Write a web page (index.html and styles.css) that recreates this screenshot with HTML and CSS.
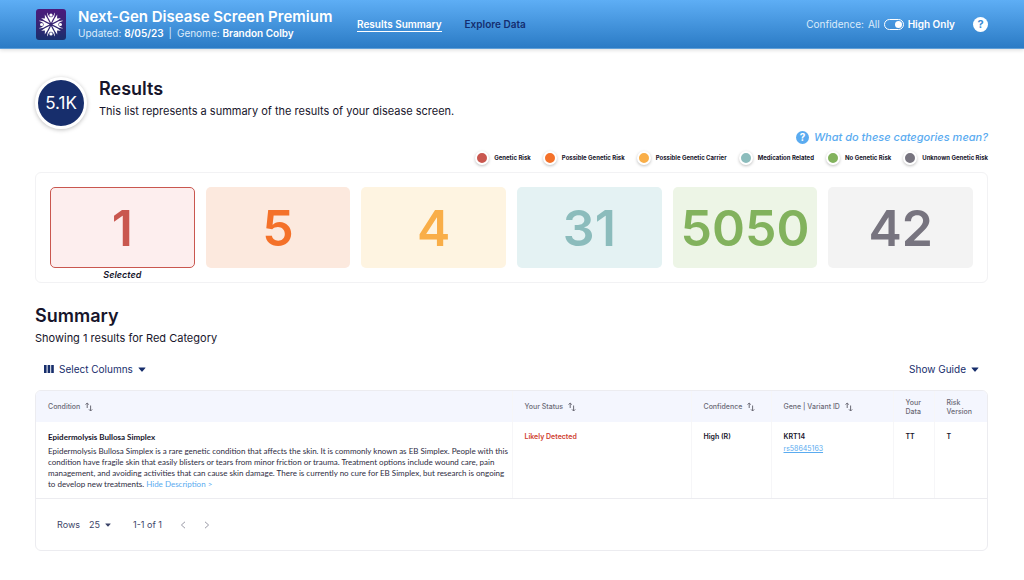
FILE: index.html
```html
<!DOCTYPE html>
<html lang="en">
<head>
    <meta charset="UTF-8">
    <meta name="viewport" content="width=device-width, initial-scale=1.0">
    <title>Next-Gen Disease Screen Premium</title>
    <link rel="stylesheet" href="styles.css">
</head>
<body>
    <!-- Shared icons -->
    <svg class="sprite" aria-hidden="true">
        <symbol id="sort" viewBox="0 0 8 10">
            <path d="M2.2 6V1M0.6 2.6L2.2 1l1.6 1.6M5.6 3.5V9M4 7.4L5.6 9l1.6-1.6" fill="none" stroke="currentColor" stroke-width="1"/>
        </symbol>
        <symbol id="caret" viewBox="0 0 8 5">
            <path d="M0.8 0.4h6.4q0.6 0.2 0.2 0.7L4.4 4.5q-0.4 0.3-0.8 0L0.6 1.1q-0.4-0.5 0.2-0.7z" fill="currentColor"/>
        </symbol>
    </svg>

    <header class="navbar">
        <svg class="logo" viewBox="0 0 30 31" aria-hidden="true">
            <defs>
                <linearGradient id="logo-bg" x1="0" y1="0" x2="0" y2="1">
                    <stop offset="0" stop-color="#4b1a7c"/>
                    <stop offset="0.45" stop-color="#3a2474"/>
                    <stop offset="1" stop-color="#182f6c"/>
                </linearGradient>
                <g id="figure">
                    <circle cx="0" cy="-9.4" r="1.6"/>
                    <path d="M-3.6-11.8Q-2.4-7.4 0-7.2Q2.4-7.4 3.6-11.8L4-11.4Q3.6-7 1.7-5L0-1.4L-1.7-5Q-3.6-7-4-11.4z"/>
                </g>
                <path id="ray" d="M0-1.6L-1.7-7L-2.6-11.4L0-8.6L2.6-11.4L1.7-7z"/>
            </defs>
            <rect width="30" height="31" rx="3" fill="url(#logo-bg)"/>
            <g transform="translate(15 15.5)" fill="#fff">
                <use href="#figure"/>
                <use href="#figure" transform="rotate(90)"/>
                <use href="#figure" transform="rotate(180)"/>
                <use href="#figure" transform="rotate(270)"/>
                <use href="#ray" transform="rotate(45)"/>
                <use href="#ray" transform="rotate(135)"/>
                <use href="#ray" transform="rotate(225)"/>
                <use href="#ray" transform="rotate(315)"/>
            </g>
        </svg>
        <div class="navbar-info">
            <h1 class="navbar-title">Next-Gen Disease Screen Premium</h1>
            <p class="navbar-meta">Updated: <strong>8/05/23</strong><span class="separator">|</span>Genome: <strong>Brandon Colby</strong></p>
        </div>
        <nav class="navbar-links">
            <a class="active" href="#results">Results Summary</a>
            <a href="#explore">Explore Data</a>
        </nav>
        <div class="confidence">
            <span>Confidence:</span>
            <span>All</span>
            <input type="checkbox" id="high-only" class="toggle" checked>
            <label for="high-only">High Only</label>
        </div>
        <button class="help-btn" aria-label="Help"><span class="question">?</span></button>
    </header>

    <main>
        <section class="results" id="results">
            <div class="total">5.1K</div>
            <div>
                <h2>Results</h2>
                <p class="subtitle">This list represents a summary of the results of your disease screen.</p>
            </div>
        </section>

        <a class="help-link" href="#categories"><span class="question">?</span>What do these categories mean?</a>

        <ul class="legend">
            <li class="red">Genetic Risk</li>
            <li class="orange">Possible Genetic Risk</li>
            <li class="yellow">Possible Genetic Carrier</li>
            <li class="teal">Medication Related</li>
            <li class="green">No Genetic Risk</li>
            <li class="gray">Unknown Genetic Risk</li>
        </ul>

        <ul class="categories" id="categories">
            <li class="red selected"><button>1</button><span>Selected</span></li>
            <li class="orange"><button>5</button></li>
            <li class="yellow"><button>4</button></li>
            <li class="teal"><button>31</button></li>
            <li class="green"><button>5050</button></li>
            <li class="gray"><button>42</button></li>
        </ul>

        <section class="summary">
            <h2>Summary</h2>
            <p class="subtitle">Showing 1 results for Red Category</p>
        </section>

        <div class="toolbar">
            <button>
                <svg class="columns-icon" viewBox="0 0 10 8" aria-hidden="true"><path d="M0 0h2.6v8H0zM3.6 0h2.6v8H3.6zM7.2 0h2.6v8H7.2z" fill="currentColor"/></svg>
                Select Columns
                <svg class="caret"><use href="#caret"/></svg>
            </button>
            <button>
                Show Guide
                <svg class="caret"><use href="#caret"/></svg>
            </button>
        </div>

        <div class="table-card">
            <table>
                <colgroup>
                    <col>
                    <col class="col-status">
                    <col class="col-confidence">
                    <col class="col-gene">
                    <col class="col-data">
                    <col class="col-version">
                </colgroup>
                <thead>
                    <tr>
                        <th><div class="heading">Condition <svg class="sort"><use href="#sort"/></svg></div></th>
                        <th><div class="heading">Your Status <svg class="sort"><use href="#sort"/></svg></div></th>
                        <th><div class="heading">Confidence <svg class="sort"><use href="#sort"/></svg></div></th>
                        <th><div class="heading">Gene | Variant ID <svg class="sort"><use href="#sort"/></svg></div></th>
                        <th>Your Data</th>
                        <th>Risk Version</th>
                    </tr>
                </thead>
                <tbody>
                    <tr>
                        <td class="condition">
                            <h3>Epidermolysis Bullosa Simplex</h3>
                            <p class="description">Epidermolysis Bullosa Simplex is a rare genetic condition that affects the skin. It is commonly known as EB Simplex. People with this condition have fragile skin that easily blisters or tears from minor friction or trauma. Treatment options include wound care, pain management, and avoiding activities that can cause skin damage. There is currently no cure for EB Simplex, but research is ongoing to develop new treatments. <a href="#hide">Hide Description &gt;</a></p>
                        </td>
                        <td class="status">Likely Detected</td>
                        <td>High (R)</td>
                        <td>KRT14<a class="variant" href="#rs58645163">rs58645163</a></td>
                        <td>TT</td>
                        <td>T</td>
                    </tr>
                </tbody>
            </table>
            <div class="pagination">
                <label for="rows">Rows</label>
                <div class="rows-select">
                    <select id="rows">
                        <option>25</option>
                        <option>50</option>
                        <option>100</option>
                    </select>
                    <svg class="caret"><use href="#caret"/></svg>
                </div>
                <span>1-1 of 1</span>
                <button aria-label="Previous page"><svg viewBox="0 0 6 8"><path d="M5 0.8L1.4 4L5 7.2" fill="none" stroke="currentColor"/></svg></button>
                <button aria-label="Next page"><svg viewBox="0 0 6 8"><path d="M1 0.8L4.6 4L1 7.2" fill="none" stroke="currentColor"/></svg></button>
            </div>
        </div>
    </main>
</body>
</html>
```
FILE: styles.css
```css
/* Basic reset */
*, *::before {
    box-sizing: border-box;
}

body {
    margin: 0;
    background-color: #fff;
    color: #17152b;
    font-family: Inter, "Liberation Sans", sans-serif;
    font-size: 11px;
}

h1, h2, h3, p, ul {
    margin: 0;
    padding: 0;
}

ul {
    list-style: none;
}

button, select {
    padding: 0;
    border: none;
    background: none;
    color: inherit;
    font: inherit;
    cursor: pointer;
}

a {
    color: #5aabf0;
    text-decoration: none;
}

.sprite {
    display: none;
}

/* Category colors */
.red { --color: #c9574f; --tint: #fdeeee; }
.orange { --color: #f47129; --tint: #fce9de; }
.yellow { --color: #f9ae48; --tint: #fef4e1; }
.teal { --color: #8bbcbc; --tint: #e4f2f3; }
.green { --color: #82b25d; --tint: #edf5e6; }
.gray { --color: #77747f; --tint: #f3f3f3; }

/* Navbar */
.navbar {
    display: flex;
    align-items: center;
    height: 49px;
    padding: 0 36px;
    background: linear-gradient(#5eaef5, #2b7bc5);
    border-bottom: 1px solid #5f9fd8;
    box-shadow: 0 1px 4px rgba(0, 0, 0, 0.15);
    color: #fff;
}

.logo {
    width: 30px;
    height: 31px;
    margin-right: 12px;
}

.navbar-info {
    width: 279px;
}

.navbar-title {
    font-size: 15px;
    font-weight: 600;
    line-height: 18px;
    white-space: nowrap;
}

.navbar-meta {
    color: #dcebfa;
    font-size: 10px;
    line-height: 14px;
}

.navbar-meta strong {
    color: #fff;
    font-weight: 600;
}

.separator {
    margin: 0 5px;
}

.navbar-links {
    display: flex;
    gap: 23px;
    font-size: 10px;
    font-weight: 600;
    line-height: 14px;
}

.navbar-links a {
    padding-top: 1px;
    border-bottom: 1px solid transparent;
    color: #142e70;
}

.navbar-links .active {
    border-color: #fff;
    color: #fff;
}

.confidence {
    display: flex;
    align-items: center;
    gap: 4px;
    margin-left: auto;
    color: #dcebfa;
    font-size: 10px;
}

.confidence label {
    color: #fff;
    font-weight: 600;
}

.toggle {
    display: flex;
    align-items: center;
    justify-content: flex-end;
    width: 20px;
    height: 11px;
    margin: 0;
    padding: 1px;
    appearance: none;
    border: 1px solid #fff;
    border-radius: 6px;
}

.toggle::before {
    content: "";
    width: 7px;
    height: 7px;
    border-radius: 50%;
    background-color: #fff;
}

.toggle:not(:checked) {
    justify-content: flex-start;
}

.question {
    display: flex;
    align-items: center;
    justify-content: center;
    width: 13px;
    height: 13px;
    border-radius: 50%;
    background-color: #5aabf0;
    color: #fff;
    font-size: 10px;
    font-style: normal;
    font-weight: 700;
}

.help-btn {
    margin-left: 18px;
}

.help-btn .question {
    width: 15px;
    height: 15px;
    background-color: #fff;
    color: #3b8bd4;
    font-size: 11px;
}

/* Results heading */
main {
    padding: 28px 36px 28px 35px;
}

h2 {
    font-size: 18px;
    font-weight: 600;
    line-height: 24px;
}

.subtitle {
    line-height: 20px;
}

.results {
    display: flex;
    gap: 12px;
}

.total {
    display: flex;
    align-items: center;
    justify-content: center;
    width: 52px;
    height: 52px;
    border: 3px solid #fff;
    border-radius: 50%;
    background-color: #172e6c;
    box-shadow: 0 1px 4px rgba(0, 0, 0, 0.25);
    color: #fff;
    font-size: 17px;
}

.help-link {
    display: flex;
    justify-content: flex-end;
    align-items: center;
    gap: 5px;
    font-size: 11px;
    font-style: italic;
    font-weight: 500;
    line-height: 16px;
}

/* Legend */
.legend {
    display: flex;
    justify-content: flex-end;
    gap: 12px;
    margin: 6px 0 7px;
    font-size: 6px;
    font-weight: 700;
    line-height: 14px;
}

.legend li {
    display: flex;
    align-items: center;
    gap: 5px;
}

.legend li::before {
    content: "";
    width: 14px;
    height: 14px;
    border: 2px solid #fff;
    border-radius: 50%;
    background-color: var(--color);
    box-shadow: 0 1px 3px rgba(0, 0, 0, 0.25);
}

/* Category tiles */
.categories {
    display: grid;
    grid-template-columns: repeat(6, 1fr);
    gap: 11px;
    min-height: 111px;
    padding: 14px 14px 0;
    border: 1px solid #f2f2f4;
    border-radius: 6px;
    text-align: center;
}

.categories button {
    width: 100%;
    height: 81px;
    border: 1px solid transparent;
    border-radius: 5px;
    background-color: var(--tint);
    color: var(--color);
    font-size: 50px;
    font-weight: 600;
}

.categories .selected button {
    border-color: var(--color);
}

.categories span {
    display: block;
    font-size: 9px;
    font-style: italic;
    font-weight: 600;
    line-height: 14px;
}

/* Summary */
.summary {
    margin-top: 21px;
}

.toolbar {
    display: flex;
    justify-content: space-between;
    margin: 12px 9px;
    color: #172e6c;
    font-size: 10px;
    line-height: 18px;
}

.toolbar button {
    display: flex;
    align-items: center;
    gap: 5px;
}

.columns-icon {
    width: 10px;
    height: 8px;
}

.caret {
    width: 8px;
    height: 5px;
}

.table-card {
    border: 1px solid #ececf0;
    border-radius: 6px;
    overflow: hidden;
}

table {
    width: 100%;
    table-layout: fixed;
    border-collapse: collapse;
}

.col-status { width: 179px; }
.col-confidence { width: 80px; }
.col-gene { width: 122px; }
.col-data { width: 41px; }
.col-version { width: 53px; }

th, td {
    padding: 0 12px;
    border-left: 1px solid #f6f6f8;
    text-align: left;
}

th:first-child, td:first-child {
    border-left: none;
}

th {
    height: 31px;
    background-color: #f4f6fe;
    color: #6b6a76;
    font-size: 7px;
    font-weight: 500;
    line-height: 9px;
}

.heading {
    display: flex;
    align-items: center;
    gap: 5px;
}

.sort {
    width: 8px;
    height: 10px;
}

td {
    padding-top: 9px;
    padding-bottom: 8px;
    border-bottom: 1px solid #ececf0;
    font-size: 7px;
    font-weight: 600;
    line-height: 12px;
    vertical-align: top;
}

.condition {
    padding-right: 0;
    font-family: Lato, sans-serif;
}

h3 {
    font-size: 8px;
    font-weight: 700;
    line-height: 13px;
}

.description {
    margin-top: 2px;
    color: #2e2c42;
    font-size: 8px;
    font-weight: 400;
    line-height: 11px;
}

/* Inline link takes the line box of the text around it */
.description a {
    line-height: inherit;
}

.status {
    color: #d0402f;
}

.variant {
    display: block;
    font-weight: 400;
    text-decoration: underline;
}

/* Pagination */
.pagination {
    display: flex;
    align-items: center;
    height: 51px;
    padding: 0 21px;
    color: #3c4468;
    font-size: 9px;
}

.rows-select {
    display: flex;
    align-items: center;
    gap: 4px;
    margin: 0 22px 0 9px;
}

.rows-select .caret {
    width: 6px;
    height: 4px;
}

.rows-select select {
    appearance: none;
    width: 12px;
}

.pagination button {
    display: flex;
    margin-left: 18px;
    color: #9a9aa6;
}

.pagination button svg {
    width: 6px;
    height: 8px;
}
```
